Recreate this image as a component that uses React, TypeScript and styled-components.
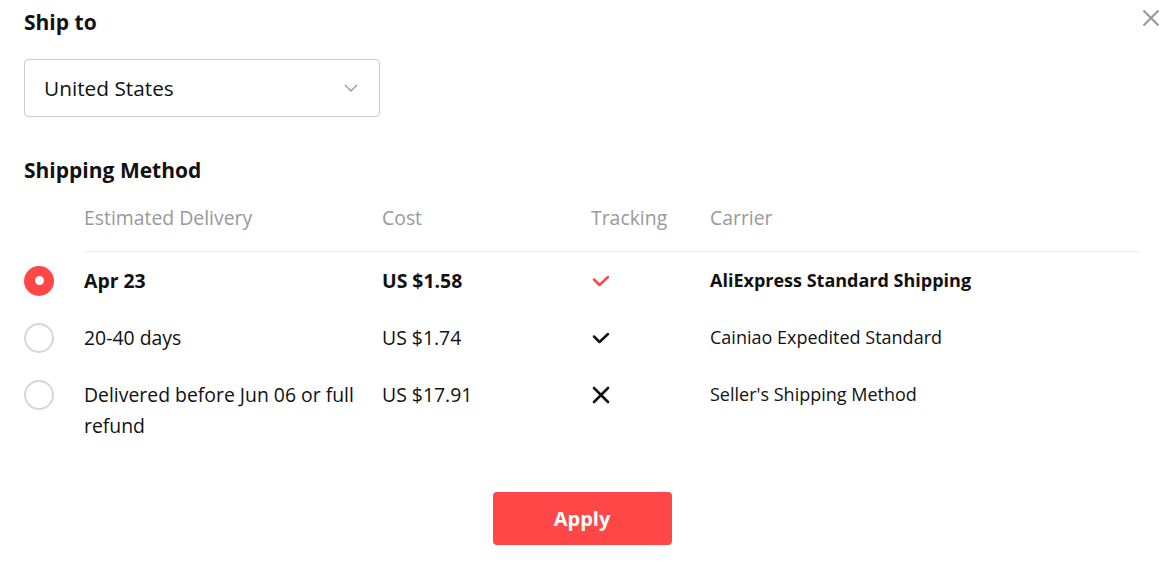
import styled, { createGlobalStyle } from 'styled-components';

const GlobalStyle = createGlobalStyle`
  body {
    margin: 0;
    background: #fff;
    font-family: 'Open Sans', 'Liberation Sans', sans-serif;
    color: #111;
  }
`;

type Method = {
  delivery: string;
  cost: string;
  tracking: boolean;
  carrier: string;
  selected?: boolean;
};

const methods: Method[] = [
  { delivery: 'Apr 23', cost: 'US $1.58', tracking: true, carrier: 'AliExpress Standard Shipping', selected: true },
  { delivery: '20-40 days', cost: 'US $1.74', tracking: true, carrier: 'Cainiao Expedited Standard' },
  { delivery: 'Delivered before Jun 06 or full refund', cost: 'US $17.91', tracking: false, carrier: "Seller's Shipping Method" },
];

const CheckIcon = ({ color }: { color: string }) => (
  <svg width="18" height="12" viewBox="0 0 18 12" fill="none">
    <path d="M2 4.5 L7.5 10 L16 2" stroke={color} strokeWidth="2.5" strokeLinecap="round" strokeLinejoin="round" />
  </svg>
);

const CrossIcon = () => (
  <svg width="18" height="18" viewBox="0 0 18 18" fill="none">
    <path d="M2 2 L16 16 M16 2 L2 16" stroke="#111" strokeWidth="2.6" strokeLinecap="round" />
  </svg>
);

const App = () => {
  return (
    <Modal>
      <GlobalStyle />
      <CloseBtn aria-label="close">
        <svg width="18" height="18" viewBox="0 0 18 18" fill="none">
          <path d="M1.5 1.5 L16.5 16.5 M16.5 1.5 L1.5 16.5" stroke="#999" strokeWidth="2.2" />
        </svg>
      </CloseBtn>
      <Title>Ship to</Title>
      <Select>
        <span>United States</span>
        <svg width="14" height="8" viewBox="0 0 14 8" fill="none">
          <path d="M1 1 L7 7 L13 1" stroke="#999" strokeWidth="1.4" />
        </svg>
      </Select>
      <SectionTitle>Shipping Method</SectionTitle>
      <Table>
        <HeadRow>
          <span />
          <HeadCell>Estimated Delivery</HeadCell>
          <HeadCell>Cost</HeadCell>
          <HeadCell>Tracking</HeadCell>
          <HeadCell>Carrier</HeadCell>
        </HeadRow>
        {methods.map((m) => (
          <Row key={m.carrier} $bold={!!m.selected}>
            <RadioCell>
              <Radio $checked={!!m.selected} />
            </RadioCell>
            <Cell>{m.delivery}</Cell>
            <Cell>{m.cost}</Cell>
            <IconCell>{m.tracking ? <CheckIcon color={m.selected ? '#ff4747' : '#111'} /> : <CrossIcon />}</IconCell>
            <Cell $small>{m.carrier}</Cell>
          </Row>
        ))}
      </Table>
      <Footer>
        <ApplyBtn>Apply</ApplyBtn>
      </Footer>
    </Modal>
  );
};

export default App;

const Modal = styled.div`
  position: relative;
  width: 1170px;
  height: 580px;
  box-sizing: border-box;
  padding: 8px 30px 0 24px;
`;
const CloseBtn = styled.button`
  position: absolute;
  top: 9px;
  right: 10px;
  border: none;
  background: none;
  padding: 0;
  cursor: pointer;
  display: flex;
`;
const Title = styled.h2`
  margin: 0;
  font-size: 21px;
  line-height: 28px;
  font-weight: 700;
`;
const Select = styled.div`
  margin-top: 23px;
  width: 356px;
  height: 58px;
  box-sizing: border-box;
  border: 1px solid #ccc;
  border-radius: 4px;
  padding: 0 21px 0 19px;
  display: flex;
  align-items: center;
  justify-content: space-between;
  font-size: 20.8px;
`;
const SectionTitle = styled.h3`
  margin: 39px 0 0;
  font-size: 21px;
  line-height: 28px;
  font-weight: 700;
`;
const Table = styled.div`
  display: flex;
  flex-direction: column;
`;
const Grid = styled.div`
  display: grid;
  grid-template-columns: 60px 298px 209px 119px 1fr;
  align-items: start;
`;
const HeadRow = styled(Grid)`
  padding: 20px 0;
  font-size: 19.4px;
  line-height: 28px;
  color: #999;
  position: relative;
  &::after {
    content: '';
    position: absolute;
    left: 60px;
    right: 0;
    bottom: 0;
    border-bottom: 1px solid #ececec;
  }
`;
const HeadCell = styled.span``;
const Row = styled(Grid)<{ $bold: boolean }>`
  padding: 13px 0;
  font-size: 19.4px;
  line-height: 31px;
  font-weight: ${(p) => (p.$bold ? 700 : 400)};
`;
const Cell = styled.span<{ $small?: boolean }>`
  padding-right: 20px;
  font-size: ${(p) => (p.$small ? '18px' : 'inherit')};
`;
const RadioCell = styled.span`
  height: 31px;
  display: flex;
  align-items: center;
`;
const IconCell = styled.span`
  height: 31px;
  display: flex;
  align-items: center;
  padding-left: 1px;
`;
const Radio = styled.span<{ $checked: boolean }>`
  width: 30px;
  height: 30px;
  box-sizing: border-box;
  border-radius: 50%;
  border: ${(p) => (p.$checked ? 'none' : '2px solid #d6d6d6')};
  background: ${(p) => (p.$checked ? '#ff4747' : '#fff')};
  display: flex;
  align-items: center;
  justify-content: center;
  &::after {
    content: '';
    display: ${(p) => (p.$checked ? 'block' : 'none')};
    width: 9px;
    height: 9px;
    border-radius: 50%;
    background: #fff;
  }
`;
const Footer = styled.div`
  display: flex;
  justify-content: center;
  margin-top: 38px;
`;
const ApplyBtn = styled.button`
  width: 179px;
  height: 53px;
  border: none;
  border-radius: 4px;
  background: #ff4747;
  color: #fff;
  font-family: 'Open Sans', 'Liberation Sans', sans-serif;
  font-size: 20px;
  font-weight: 700;
  cursor: pointer;
`;
